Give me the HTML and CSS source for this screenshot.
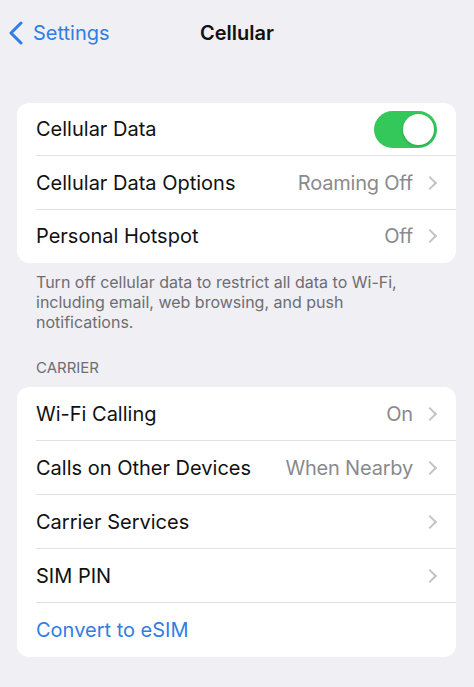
FILE: index.html
```html
<!DOCTYPE html>
<html lang="en">
<head>
  <meta charset="UTF-8">
  <meta name="viewport" content="width=device-width, initial-scale=1.0">
  <title>Cellular</title>
  <link rel="stylesheet" href="styles.css">
</head>
<body>
  <div class="nav">
    <a class="back" href="#">
      <svg width="16" height="24" viewBox="0 0 16 24"><polyline points="13,2 3,12 13,22" fill="none" stroke="currentColor" stroke-width="3" stroke-linecap="round" stroke-linejoin="round"/></svg>
      <span>Settings</span>
    </a>
    <div class="title">Cellular</div>
    <div></div>
  </div>

  <div class="group first">
    <div class="row">
      <span class="label">Cellular Data</span>
      <div class="toggle on"><div class="knob"></div></div>
    </div>
    <div class="row">
      <span class="label">Cellular Data Options</span>
      <span class="value">Roaming Off</span>
      <span class="chev"></span>
    </div>
    <div class="row">
      <span class="label">Personal Hotspot</span>
      <span class="value">Off</span>
      <span class="chev"></span>
    </div>
  </div>
  <p class="footer">Turn off cellular data to restrict all data to Wi-Fi, including email, web browsing, and push notifications.</p>

  <div class="section-title">CARRIER</div>
  <div class="group">
    <div class="row">
      <span class="label">Wi-Fi Calling</span>
      <span class="value">On</span>
      <span class="chev"></span>
    </div>
    <div class="row">
      <span class="label">Calls on Other Devices</span>
      <span class="value">When Nearby</span>
      <span class="chev"></span>
    </div>
    <div class="row">
      <span class="label">Carrier Services</span>
      <span class="value"></span>
      <span class="chev"></span>
    </div>
    <div class="row">
      <span class="label">SIM PIN</span>
      <span class="value"></span>
      <span class="chev"></span>
    </div>
    <div class="row">
      <span class="label link">Convert to eSIM</span>
    </div>
  </div>
</body>
</html>
```

FILE: styles.css
```css
body { margin: 0; background: #efeff4; font-family: Inter, "Liberation Sans", sans-serif; color: #111; }

.nav { display: grid; grid-template-columns: 1fr auto 1fr; align-items: center; height: 66px; padding: 0 8px; }
.back { display: flex; align-items: center; gap: 9px; color: #2f7de6; text-decoration: none; font-size: 20px; }
.back svg { display: block; }
.title { font-size: 20px; font-weight: 600; }

.group { background: #fff; margin: 37px 18px 0 17px; border-radius: 12px; overflow: hidden; }
.row { display: flex; align-items: center; height: 54px; margin-left: 19px; padding-right: 19px; border-bottom: 1px solid #e2e2e6; box-sizing: border-box; font-size: 20px; }
.group.first .row { height: 53.4px; }
.row:last-child { border-bottom: none; }
.label { flex: 1; white-space: nowrap; }
.link { color: #2f7de6; }
.value { color: #8a8a8e; margin-right: 12px; letter-spacing: -0.2px; }
.chev { width: 8px; height: 8px; border-top: 2px solid #c4c4c7; border-right: 2px solid #c4c4c7; transform: rotate(45deg); margin-right: 2px; }

.toggle { width: 63px; height: 37px; border-radius: 19px; background: #e5e5ea; position: relative; }
.toggle.on { background: #34c759; }
.knob { position: absolute; top: 3px; right: 3px; width: 31px; height: 31px; border-radius: 50%; background: #fff; box-shadow: 0 1px 3px rgba(0,0,0,0.2); }

.footer { margin: 0 36px; padding-top: 9px; font-size: 16px; line-height: 20px; color: #6d6d72; }
.section-title { margin: 26px 36px 0; font-size: 15px; line-height: 20px; color: #6d6d72; }
.section-title + .group { margin-top: 9px; }
```
